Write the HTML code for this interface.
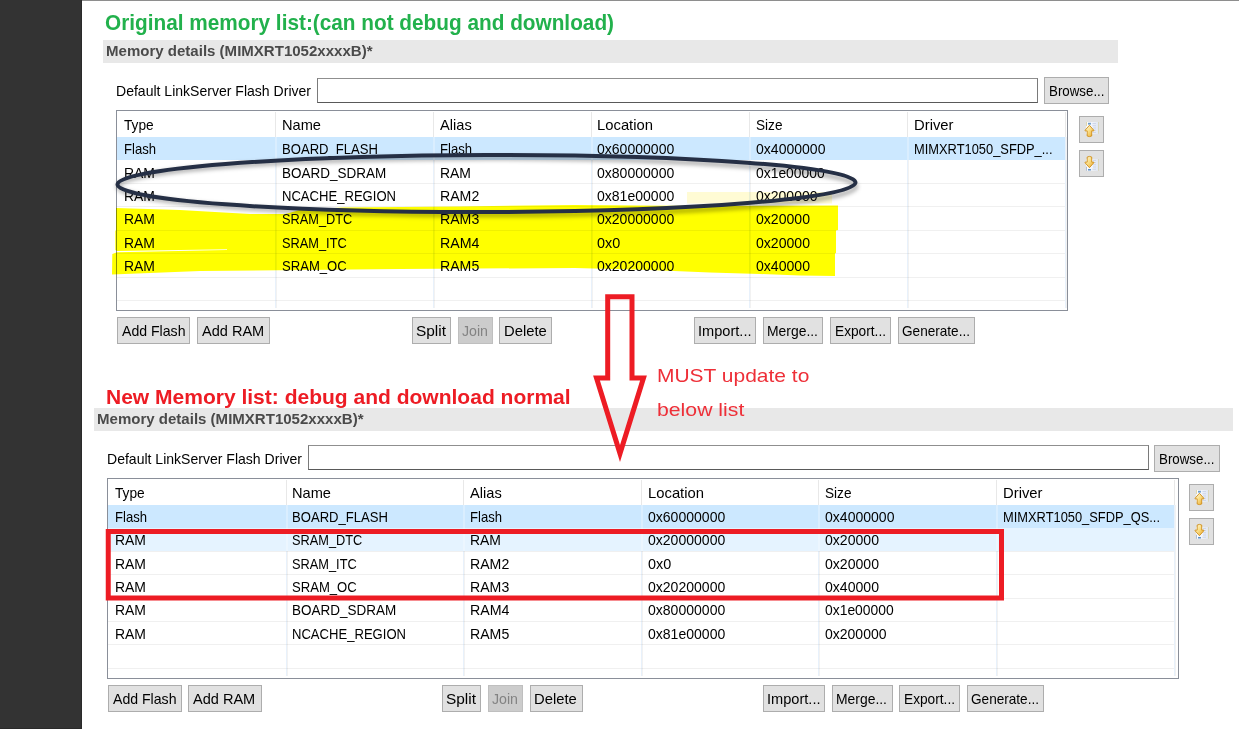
<!DOCTYPE html>
<html lang="en"><head><meta charset="utf-8"><title>Memory list</title>
<style>
html,body{margin:0;padding:0;background:#fff}
body{width:1239px;height:740px;position:relative;overflow:hidden;font-family:"Liberation Sans", sans-serif;}
.t{position:absolute;white-space:nowrap;line-height:1;transform-origin:0 0;}
</style></head><body>
<div style="position:absolute;left:0px;top:0px;width:81px;height:728px;background:#333333;border-right:1px solid #2a2a2a;border-bottom:1px solid #2a2a2a;"></div>
<div style="position:absolute;left:82px;top:0px;width:1157px;height:1px;background:#8e8e8e;"></div>
<div style="position:absolute;left:102.5px;top:39.5px;width:1015.5px;height:23px;background:#e8e8e8;"></div>
<div style="position:absolute;left:317px;top:77.5px;width:719px;height:23px;background:#fff;border:1px solid #7a7a7a;border-top:1.5px solid #8f8f8f;border-bottom:1.5px solid #595959;"></div>
<div style="position:absolute;left:1044px;top:77px;width:63px;height:25px;background:#e1e1e1;border:1px solid #adadad;"></div>
<div style="position:absolute;left:116px;top:110px;width:950px;height:198.5px;background:#fff;border:1px solid #8a8f99;"></div>
<div style="position:absolute;left:117px;top:183.06px;width:948px;height:1px;background:#f0f0f0;"></div>
<div style="position:absolute;left:117px;top:206.48999999999998px;width:948px;height:1px;background:#f0f0f0;"></div>
<div style="position:absolute;left:117px;top:229.92px;width:948px;height:1px;background:#f0f0f0;"></div>
<div style="position:absolute;left:117px;top:253.35px;width:948px;height:1px;background:#f0f0f0;"></div>
<div style="position:absolute;left:117px;top:276.78px;width:948px;height:1px;background:#f0f0f0;"></div>
<div style="position:absolute;left:117px;top:300.21px;width:948px;height:1px;background:#f0f0f0;"></div>
<div style="position:absolute;left:275px;top:112px;width:1px;height:24.69999999999999px;background:#e8e8e8;"></div>
<div style="position:absolute;left:275px;top:136.7px;width:1px;height:171.8px;background:rgba(150,190,235,0.22);"></div>
<div style="position:absolute;left:276px;top:136.7px;width:1px;height:171.8px;background:rgba(0,0,0,0.05);"></div>
<div style="position:absolute;left:433px;top:112px;width:1px;height:24.69999999999999px;background:#e8e8e8;"></div>
<div style="position:absolute;left:433px;top:136.7px;width:1px;height:171.8px;background:rgba(150,190,235,0.22);"></div>
<div style="position:absolute;left:434px;top:136.7px;width:1px;height:171.8px;background:rgba(0,0,0,0.05);"></div>
<div style="position:absolute;left:591px;top:112px;width:1px;height:24.69999999999999px;background:#e8e8e8;"></div>
<div style="position:absolute;left:591px;top:136.7px;width:1px;height:171.8px;background:rgba(150,190,235,0.22);"></div>
<div style="position:absolute;left:592px;top:136.7px;width:1px;height:171.8px;background:rgba(0,0,0,0.05);"></div>
<div style="position:absolute;left:749px;top:112px;width:1px;height:24.69999999999999px;background:#e8e8e8;"></div>
<div style="position:absolute;left:749px;top:136.7px;width:1px;height:171.8px;background:rgba(150,190,235,0.22);"></div>
<div style="position:absolute;left:750px;top:136.7px;width:1px;height:171.8px;background:rgba(0,0,0,0.05);"></div>
<div style="position:absolute;left:907px;top:112px;width:1px;height:24.69999999999999px;background:#e8e8e8;"></div>
<div style="position:absolute;left:907px;top:136.7px;width:1px;height:171.8px;background:rgba(150,190,235,0.22);"></div>
<div style="position:absolute;left:908px;top:136.7px;width:1px;height:171.8px;background:rgba(0,0,0,0.05);"></div>
<div style="position:absolute;left:1065px;top:112px;width:1px;height:24.69999999999999px;background:#e8e8e8;"></div>
<div style="position:absolute;left:1065px;top:136.7px;width:1px;height:171.8px;background:rgba(150,190,235,0.22);"></div>
<div style="position:absolute;left:1066px;top:136.7px;width:1px;height:171.8px;background:rgba(0,0,0,0.05);"></div>
<div style="position:absolute;left:117px;top:136.7px;width:948px;height:23.43px;background:#cce8ff;"></div>
<div style="position:absolute;left:275px;top:136.7px;width:2px;height:23.43px;background:rgba(255,255,255,0.28);"></div>
<div style="position:absolute;left:433px;top:136.7px;width:2px;height:23.43px;background:rgba(255,255,255,0.28);"></div>
<div style="position:absolute;left:591px;top:136.7px;width:2px;height:23.43px;background:rgba(255,255,255,0.28);"></div>
<div style="position:absolute;left:749px;top:136.7px;width:2px;height:23.43px;background:rgba(255,255,255,0.28);"></div>
<div style="position:absolute;left:907px;top:136.7px;width:2px;height:23.43px;background:rgba(255,255,255,0.28);"></div>
<div style="position:absolute;left:1079px;top:116px;width:23px;height:25px;background:#e1e1e1;border:1px solid #adadad;"></div>
<svg style="position:absolute;left:1084px;top:121px" width="17" height="18" viewBox="0 0 17 18"><defs><linearGradient id="g1079_116" x1="0" y1="0" x2="1" y2="1"><stop offset="0" stop-color="#fffbe6"/><stop offset="0.45" stop-color="#fbe08a"/><stop offset="1" stop-color="#e9a526"/></linearGradient><linearGradient id="g1079_116p" x1="0" x2="1"><stop offset="0" stop-color="#ffffff"/><stop offset="1" stop-color="#dfe6f3"/></linearGradient></defs>
<rect x="2.3" y="1" width="12.3" height="11.8" fill="url(#g1079_116p)"/>
<rect x="2" y="1" width="0.8" height="4" fill="#d9cf9a"/><rect x="14" y="1" width="0.9" height="11.8" fill="#d8d4b4"/>
<rect x="4" y="1.8" width="2.9" height="1.8" fill="#6a9bcc"/>
<g stroke="#c6d0e6" stroke-width="0.9"><path d="M8.5 2.6h3.5M8.5 4.8h3.5M9 7h3M9 9.2h3M8.5 11.4h3.5"/></g>
<path d="M5.45 4.3 L9.8 9.2 V9.9 H7.7 V15 Q5.45 16.2 3.2 15 V9.9 H1.1 V9.2 Z" fill="url(#g1079_116)" stroke="#cf8f1c" stroke-width="0.9" stroke-linejoin="round"/>
</svg>
<div style="position:absolute;left:1079px;top:150px;width:23px;height:25px;background:#e1e1e1;border:1px solid #adadad;"></div>
<svg style="position:absolute;left:1084px;top:155px" width="17" height="18" viewBox="0 0 17 18"><defs><linearGradient id="g1079_150" x1="0" y1="0" x2="1" y2="1"><stop offset="0" stop-color="#fffbe6"/><stop offset="0.45" stop-color="#fbe08a"/><stop offset="1" stop-color="#e9a526"/></linearGradient><linearGradient id="g1079_150p" x1="0" x2="1"><stop offset="0" stop-color="#ffffff"/><stop offset="1" stop-color="#dfe6f3"/></linearGradient></defs>
<rect x="2.3" y="4" width="12.3" height="11.8" fill="url(#g1079_150p)"/>
<rect x="2" y="11.8" width="0.8" height="4" fill="#9fb0c8"/><rect x="14" y="4" width="0.9" height="11.8" fill="#d8d4b4"/>
<rect x="4" y="14" width="2.9" height="1.5" fill="#5d90c8"/>
<g stroke="#c6d0e6" stroke-width="0.9"><path d="M9 5.4h3M9 7.6h3M9 9.8h3M9 12h3M8.5 14.2h3.5"/></g>
<path d="M5.45 12.7 L9.8 7.8 V7.1 H7.7 V2 Q5.45 0.8 3.2 2 V7.1 H1.1 V7.8 Z" fill="url(#g1079_150)" stroke="#cf8f1c" stroke-width="0.9" stroke-linejoin="round"/>
</svg>
<div style="position:absolute;left:117px;top:317px;width:71px;height:25px;background:#e1e1e1;border:1px solid #adadad;"></div>
<div style="position:absolute;left:197px;top:317px;width:71px;height:25px;background:#e1e1e1;border:1px solid #adadad;"></div>
<div style="position:absolute;left:412px;top:317px;width:37px;height:25px;background:#e1e1e1;border:1px solid #adadad;"></div>
<div style="position:absolute;left:457.5px;top:317px;width:33.5px;height:25px;background:#cccccc;border:1px solid #bfbfbf;"></div>
<div style="position:absolute;left:499px;top:317px;width:51px;height:25px;background:#e1e1e1;border:1px solid #adadad;"></div>
<div style="position:absolute;left:694px;top:317px;width:60px;height:25px;background:#e1e1e1;border:1px solid #adadad;"></div>
<div style="position:absolute;left:763px;top:317px;width:58px;height:25px;background:#e1e1e1;border:1px solid #adadad;"></div>
<div style="position:absolute;left:830px;top:317px;width:59px;height:25px;background:#e1e1e1;border:1px solid #adadad;"></div>
<div style="position:absolute;left:897.5px;top:317px;width:75.0px;height:25px;background:#e1e1e1;border:1px solid #adadad;"></div>
<div style="position:absolute;left:94px;top:407.5px;width:1139px;height:23px;background:#e8e8e8;"></div>
<div style="position:absolute;left:308px;top:445px;width:838.5px;height:23px;background:#fff;border:1px solid #7a7a7a;border-top:1.5px solid #8f8f8f;border-bottom:1.5px solid #595959;"></div>
<div style="position:absolute;left:1154px;top:444.5px;width:63.5px;height:25.0px;background:#e1e1e1;border:1px solid #adadad;"></div>
<div style="position:absolute;left:106.5px;top:478px;width:1070.0px;height:198.5px;background:#fff;border:1px solid #8a8f99;"></div>
<div style="position:absolute;left:107.5px;top:551.0px;width:1066.5px;height:1px;background:#f0f0f0;"></div>
<div style="position:absolute;left:107.5px;top:574.35px;width:1066.5px;height:1px;background:#f0f0f0;"></div>
<div style="position:absolute;left:107.5px;top:597.7px;width:1066.5px;height:1px;background:#f0f0f0;"></div>
<div style="position:absolute;left:107.5px;top:621.05px;width:1066.5px;height:1px;background:#f0f0f0;"></div>
<div style="position:absolute;left:107.5px;top:644.4000000000001px;width:1066.5px;height:1px;background:#f0f0f0;"></div>
<div style="position:absolute;left:107.5px;top:667.75px;width:1066.5px;height:1px;background:#f0f0f0;"></div>
<div style="position:absolute;left:286px;top:480px;width:1px;height:24.80000000000001px;background:#e8e8e8;"></div>
<div style="position:absolute;left:286px;top:504.8px;width:1px;height:171.7px;background:rgba(150,190,235,0.22);"></div>
<div style="position:absolute;left:287px;top:504.8px;width:1px;height:171.7px;background:rgba(0,0,0,0.05);"></div>
<div style="position:absolute;left:463px;top:480px;width:1px;height:24.80000000000001px;background:#e8e8e8;"></div>
<div style="position:absolute;left:463px;top:504.8px;width:1px;height:171.7px;background:rgba(150,190,235,0.22);"></div>
<div style="position:absolute;left:464px;top:504.8px;width:1px;height:171.7px;background:rgba(0,0,0,0.05);"></div>
<div style="position:absolute;left:641px;top:480px;width:1px;height:24.80000000000001px;background:#e8e8e8;"></div>
<div style="position:absolute;left:641px;top:504.8px;width:1px;height:171.7px;background:rgba(150,190,235,0.22);"></div>
<div style="position:absolute;left:642px;top:504.8px;width:1px;height:171.7px;background:rgba(0,0,0,0.05);"></div>
<div style="position:absolute;left:818px;top:480px;width:1px;height:24.80000000000001px;background:#e8e8e8;"></div>
<div style="position:absolute;left:818px;top:504.8px;width:1px;height:171.7px;background:rgba(150,190,235,0.22);"></div>
<div style="position:absolute;left:819px;top:504.8px;width:1px;height:171.7px;background:rgba(0,0,0,0.05);"></div>
<div style="position:absolute;left:996px;top:480px;width:1px;height:24.80000000000001px;background:#e8e8e8;"></div>
<div style="position:absolute;left:996px;top:504.8px;width:1px;height:171.7px;background:rgba(150,190,235,0.22);"></div>
<div style="position:absolute;left:997px;top:504.8px;width:1px;height:171.7px;background:rgba(0,0,0,0.05);"></div>
<div style="position:absolute;left:1174px;top:480px;width:1px;height:24.80000000000001px;background:#e8e8e8;"></div>
<div style="position:absolute;left:1174px;top:504.8px;width:1px;height:171.7px;background:rgba(150,190,235,0.22);"></div>
<div style="position:absolute;left:1175px;top:504.8px;width:1px;height:171.7px;background:rgba(0,0,0,0.05);"></div>
<div style="position:absolute;left:107.5px;top:504.8px;width:1066.5px;height:23.35px;background:#cce8ff;"></div>
<div style="position:absolute;left:107.5px;top:528.15px;width:1066.5px;height:23.35px;background:#e5f3ff;"></div>
<div style="position:absolute;left:286px;top:504.8px;width:2px;height:23.35px;background:rgba(255,255,255,0.28);"></div>
<div style="position:absolute;left:286px;top:528.15px;width:2px;height:23.35px;background:rgba(255,255,255,0.28);"></div>
<div style="position:absolute;left:463px;top:504.8px;width:2px;height:23.35px;background:rgba(255,255,255,0.28);"></div>
<div style="position:absolute;left:463px;top:528.15px;width:2px;height:23.35px;background:rgba(255,255,255,0.28);"></div>
<div style="position:absolute;left:641px;top:504.8px;width:2px;height:23.35px;background:rgba(255,255,255,0.28);"></div>
<div style="position:absolute;left:641px;top:528.15px;width:2px;height:23.35px;background:rgba(255,255,255,0.28);"></div>
<div style="position:absolute;left:818px;top:504.8px;width:2px;height:23.35px;background:rgba(255,255,255,0.28);"></div>
<div style="position:absolute;left:818px;top:528.15px;width:2px;height:23.35px;background:rgba(255,255,255,0.28);"></div>
<div style="position:absolute;left:996px;top:504.8px;width:2px;height:23.35px;background:rgba(255,255,255,0.28);"></div>
<div style="position:absolute;left:996px;top:528.15px;width:2px;height:23.35px;background:rgba(255,255,255,0.28);"></div>
<div style="position:absolute;left:1189px;top:484px;width:23px;height:25px;background:#e1e1e1;border:1px solid #adadad;"></div>
<svg style="position:absolute;left:1194px;top:489px" width="17" height="18" viewBox="0 0 17 18"><defs><linearGradient id="g1189_484" x1="0" y1="0" x2="1" y2="1"><stop offset="0" stop-color="#fffbe6"/><stop offset="0.45" stop-color="#fbe08a"/><stop offset="1" stop-color="#e9a526"/></linearGradient><linearGradient id="g1189_484p" x1="0" x2="1"><stop offset="0" stop-color="#ffffff"/><stop offset="1" stop-color="#dfe6f3"/></linearGradient></defs>
<rect x="2.3" y="1" width="12.3" height="11.8" fill="url(#g1189_484p)"/>
<rect x="2" y="1" width="0.8" height="4" fill="#d9cf9a"/><rect x="14" y="1" width="0.9" height="11.8" fill="#d8d4b4"/>
<rect x="4" y="1.8" width="2.9" height="1.8" fill="#6a9bcc"/>
<g stroke="#c6d0e6" stroke-width="0.9"><path d="M8.5 2.6h3.5M8.5 4.8h3.5M9 7h3M9 9.2h3M8.5 11.4h3.5"/></g>
<path d="M5.45 4.3 L9.8 9.2 V9.9 H7.7 V15 Q5.45 16.2 3.2 15 V9.9 H1.1 V9.2 Z" fill="url(#g1189_484)" stroke="#cf8f1c" stroke-width="0.9" stroke-linejoin="round"/>
</svg>
<div style="position:absolute;left:1189px;top:518px;width:23px;height:25px;background:#e1e1e1;border:1px solid #adadad;"></div>
<svg style="position:absolute;left:1194px;top:523px" width="17" height="18" viewBox="0 0 17 18"><defs><linearGradient id="g1189_518" x1="0" y1="0" x2="1" y2="1"><stop offset="0" stop-color="#fffbe6"/><stop offset="0.45" stop-color="#fbe08a"/><stop offset="1" stop-color="#e9a526"/></linearGradient><linearGradient id="g1189_518p" x1="0" x2="1"><stop offset="0" stop-color="#ffffff"/><stop offset="1" stop-color="#dfe6f3"/></linearGradient></defs>
<rect x="2.3" y="4" width="12.3" height="11.8" fill="url(#g1189_518p)"/>
<rect x="2" y="11.8" width="0.8" height="4" fill="#9fb0c8"/><rect x="14" y="4" width="0.9" height="11.8" fill="#d8d4b4"/>
<rect x="4" y="14" width="2.9" height="1.5" fill="#5d90c8"/>
<g stroke="#c6d0e6" stroke-width="0.9"><path d="M9 5.4h3M9 7.6h3M9 9.8h3M9 12h3M8.5 14.2h3.5"/></g>
<path d="M5.45 12.7 L9.8 7.8 V7.1 H7.7 V2 Q5.45 0.8 3.2 2 V7.1 H1.1 V7.8 Z" fill="url(#g1189_518)" stroke="#cf8f1c" stroke-width="0.9" stroke-linejoin="round"/>
</svg>
<div style="position:absolute;left:108.25px;top:684.5px;width:71.25px;height:25.0px;background:#e1e1e1;border:1px solid #adadad;"></div>
<div style="position:absolute;left:188.25px;top:684.5px;width:71.25px;height:25.0px;background:#e1e1e1;border:1px solid #adadad;"></div>
<div style="position:absolute;left:442px;top:684.5px;width:37px;height:25.0px;background:#e1e1e1;border:1px solid #adadad;"></div>
<div style="position:absolute;left:487.75px;top:684.5px;width:33.25px;height:25.0px;background:#cccccc;border:1px solid #bfbfbf;"></div>
<div style="position:absolute;left:529.75px;top:684.5px;width:51.0px;height:25.0px;background:#e1e1e1;border:1px solid #adadad;"></div>
<div style="position:absolute;left:763px;top:684.5px;width:60.25px;height:25.0px;background:#e1e1e1;border:1px solid #adadad;"></div>
<div style="position:absolute;left:832px;top:684.5px;width:59px;height:25.0px;background:#e1e1e1;border:1px solid #adadad;"></div>
<div style="position:absolute;left:899.25px;top:684.5px;width:58.75px;height:25.0px;background:#e1e1e1;border:1px solid #adadad;"></div>
<div style="position:absolute;left:966.5px;top:684.5px;width:75.0px;height:25.0px;background:#e1e1e1;border:1px solid #adadad;"></div>
<span class="t" id="t0" style="left:105.10px;top:12px;font-size:22px;color:#22b14c;font-weight:bold;transform:scaleX(0.9443);">Original memory list:(can not debug and download)</span>
<span class="t" id="t1" style="left:106.10px;top:43px;font-size:15px;color:#4a4a4a;font-weight:bold;transform:scaleX(1.0021);">Memory details (MIMXRT1052xxxxB)*</span>
<span class="t" id="t2" style="left:116.10px;top:83px;font-size:15px;color:#000;transform:scaleX(0.9357);">Default LinkServer Flash Driver</span>
<span class="t" id="t3" style="left:1048.60px;top:83px;font-size:15px;color:#000;transform:scaleX(0.8876);">Browse...</span>
<span class="t" id="t4" style="left:123.60px;top:117px;font-size:15px;color:#000;transform:scaleX(0.9145);">Type</span>
<span class="t" id="t5" style="left:281.60px;top:117px;font-size:15px;color:#000;transform:scaleX(0.9746);">Name</span>
<span class="t" id="t6" style="left:439.60px;top:117px;font-size:15px;color:#000;transform:scaleX(0.9765);">Alias</span>
<span class="t" id="t7" style="left:597.35px;top:117px;font-size:15px;color:#000;transform:scaleX(0.9873);">Location</span>
<span class="t" id="t8" style="left:755.60px;top:117px;font-size:15px;color:#000;transform:scaleX(0.9079);">Size</span>
<span class="t" id="t9" style="left:913.60px;top:117px;font-size:15px;color:#000;transform:scaleX(0.9875);">Driver</span>
<span class="t" id="t10" style="left:123.60px;top:141px;font-size:15px;color:#000;transform:scaleX(0.8722);">Flash</span>
<span class="t" id="t11" style="left:281.60px;top:141px;font-size:15px;color:#000;transform:scaleX(0.8724);">BOARD_FLASH</span>
<span class="t" id="t12" style="left:439.60px;top:141px;font-size:15px;color:#000;transform:scaleX(0.8722);">Flash</span>
<span class="t" id="t13" style="left:597.35px;top:141px;font-size:15px;color:#000;transform:scaleX(0.9353);">0x60000000</span>
<span class="t" id="t14" style="left:755.60px;top:141px;font-size:15px;color:#000;transform:scaleX(0.9360);">0x4000000</span>
<span class="t" id="t15" style="left:913.60px;top:141px;font-size:15px;color:#000;transform:scaleX(0.8578);">MIMXRT1050_SFDP_...</span>
<span class="t" id="t16" style="left:123.60px;top:165px;font-size:15px;color:#000;transform:scaleX(0.9297);">RAM</span>
<span class="t" id="t17" style="left:281.60px;top:165px;font-size:15px;color:#000;transform:scaleX(0.8998);">BOARD_SDRAM</span>
<span class="t" id="t18" style="left:439.60px;top:165px;font-size:15px;color:#000;transform:scaleX(0.9297);">RAM</span>
<span class="t" id="t19" style="left:597.35px;top:165px;font-size:15px;color:#000;transform:scaleX(0.9353);">0x80000000</span>
<span class="t" id="t20" style="left:755.60px;top:165px;font-size:15px;color:#000;transform:scaleX(0.9259);">0x1e00000</span>
<span class="t" id="t21" style="left:123.60px;top:188px;font-size:15px;color:#000;transform:scaleX(0.9297);">RAM</span>
<span class="t" id="t22" style="left:281.60px;top:188px;font-size:15px;color:#000;transform:scaleX(0.8712);">NCACHE_REGION</span>
<span class="t" id="t23" style="left:439.60px;top:188px;font-size:15px;color:#000;transform:scaleX(0.9415);">RAM2</span>
<span class="t" id="t24" style="left:597.35px;top:188px;font-size:15px;color:#000;transform:scaleX(0.9353);">0x81e00000</span>
<span class="t" id="t25" style="left:755.60px;top:188px;font-size:15px;color:#000;transform:scaleX(0.9331);">0x200000</span>
<span class="t" id="t26" style="left:123.60px;top:211px;font-size:15px;color:#000;transform:scaleX(0.9297);">RAM</span>
<span class="t" id="t27" style="left:281.60px;top:211px;font-size:15px;color:#000;transform:scaleX(0.8514);">SRAM_DTC</span>
<span class="t" id="t28" style="left:439.60px;top:211px;font-size:15px;color:#000;transform:scaleX(0.9415);">RAM3</span>
<span class="t" id="t29" style="left:597.35px;top:211px;font-size:15px;color:#000;transform:scaleX(0.9353);">0x20000000</span>
<span class="t" id="t30" style="left:755.60px;top:211px;font-size:15px;color:#000;transform:scaleX(0.9381);">0x20000</span>
<span class="t" id="t31" style="left:123.60px;top:235px;font-size:15px;color:#000;transform:scaleX(0.9297);">RAM</span>
<span class="t" id="t32" style="left:281.60px;top:235px;font-size:15px;color:#000;transform:scaleX(0.8537);">SRAM_ITC</span>
<span class="t" id="t33" style="left:439.60px;top:235px;font-size:15px;color:#000;transform:scaleX(0.9475);">RAM4</span>
<span class="t" id="t34" style="left:597.35px;top:235px;font-size:15px;color:#000;transform:scaleX(0.9612);">0x0</span>
<span class="t" id="t35" style="left:755.60px;top:235px;font-size:15px;color:#000;transform:scaleX(0.9381);">0x20000</span>
<span class="t" id="t36" style="left:123.60px;top:258px;font-size:15px;color:#000;transform:scaleX(0.9297);">RAM</span>
<span class="t" id="t37" style="left:281.60px;top:258px;font-size:15px;color:#000;transform:scaleX(0.8728);">SRAM_OC</span>
<span class="t" id="t38" style="left:439.60px;top:258px;font-size:15px;color:#000;transform:scaleX(0.9415);">RAM5</span>
<span class="t" id="t39" style="left:597.35px;top:258px;font-size:15px;color:#000;transform:scaleX(0.9353);">0x20200000</span>
<span class="t" id="t40" style="left:755.60px;top:258px;font-size:15px;color:#000;transform:scaleX(0.9381);">0x40000</span>
<span class="t" id="t41" style="left:121.60px;top:323px;font-size:15px;color:#000;transform:scaleX(0.9401);">Add Flash</span>
<span class="t" id="t42" style="left:201.60px;top:323px;font-size:15px;color:#000;transform:scaleX(0.9696);">Add RAM</span>
<span class="t" id="t43" style="left:415.85px;top:323px;font-size:15px;color:#000;transform:scaleX(1.0278);">Split</span>
<span class="t" id="t44" style="left:461.60px;top:323px;font-size:15px;color:#838383;transform:scaleX(0.9444);">Join</span>
<span class="t" id="t45" style="left:504.10px;top:323px;font-size:15px;color:#000;transform:scaleX(0.9859);">Delete</span>
<span class="t" id="t46" style="left:697.85px;top:323px;font-size:15px;color:#000;transform:scaleX(0.9725);">Import...</span>
<span class="t" id="t47" style="left:767.35px;top:323px;font-size:15px;color:#000;transform:scaleX(0.9267);">Merge...</span>
<span class="t" id="t48" style="left:834.60px;top:323px;font-size:15px;color:#000;transform:scaleX(0.9130);">Export...</span>
<span class="t" id="t49" style="left:901.60px;top:323px;font-size:15px;color:#000;transform:scaleX(0.9061);">Generate...</span>
<span class="t" id="t50" style="left:106.30px;top:386px;font-size:21px;color:#ed1c24;font-weight:bold;transform:scaleX(1.0005);">New Memory list: debug and download normal</span>
<span class="t" id="t51" style="left:97.35px;top:411px;font-size:15px;color:#4a4a4a;font-weight:bold;transform:scaleX(1.0021);">Memory details (MIMXRT1052xxxxB)*</span>
<span class="t" id="t52" style="left:107.35px;top:451px;font-size:15px;color:#000;transform:scaleX(0.9357);">Default LinkServer Flash Driver</span>
<span class="t" id="t53" style="left:1158.85px;top:451px;font-size:15px;color:#000;transform:scaleX(0.8876);">Browse...</span>
<span class="t" id="t54" style="left:114.85px;top:485px;font-size:15px;color:#000;transform:scaleX(0.9145);">Type</span>
<span class="t" id="t55" style="left:292.35px;top:485px;font-size:15px;color:#000;transform:scaleX(0.9746);">Name</span>
<span class="t" id="t56" style="left:470.10px;top:485px;font-size:15px;color:#000;transform:scaleX(0.9765);">Alias</span>
<span class="t" id="t57" style="left:647.60px;top:485px;font-size:15px;color:#000;transform:scaleX(0.9873);">Location</span>
<span class="t" id="t58" style="left:825.10px;top:485px;font-size:15px;color:#000;transform:scaleX(0.9079);">Size</span>
<span class="t" id="t59" style="left:1002.60px;top:485px;font-size:15px;color:#000;transform:scaleX(0.9875);">Driver</span>
<span class="t" id="t60" style="left:114.85px;top:509px;font-size:15px;color:#000;transform:scaleX(0.8722);">Flash</span>
<span class="t" id="t61" style="left:292.35px;top:509px;font-size:15px;color:#000;transform:scaleX(0.8724);">BOARD_FLASH</span>
<span class="t" id="t62" style="left:470.10px;top:509px;font-size:15px;color:#000;transform:scaleX(0.8722);">Flash</span>
<span class="t" id="t63" style="left:647.60px;top:509px;font-size:15px;color:#000;transform:scaleX(0.9353);">0x60000000</span>
<span class="t" id="t64" style="left:825.10px;top:509px;font-size:15px;color:#000;transform:scaleX(0.9360);">0x4000000</span>
<span class="t" id="t65" style="left:1002.60px;top:509px;font-size:15px;color:#000;transform:scaleX(0.8573);">MIMXRT1050_SFDP_QS...</span>
<span class="t" id="t66" style="left:114.85px;top:532px;font-size:15px;color:#000;transform:scaleX(0.9297);">RAM</span>
<span class="t" id="t67" style="left:292.35px;top:532px;font-size:15px;color:#000;transform:scaleX(0.8514);">SRAM_DTC</span>
<span class="t" id="t68" style="left:470.10px;top:532px;font-size:15px;color:#000;transform:scaleX(0.9297);">RAM</span>
<span class="t" id="t69" style="left:647.60px;top:532px;font-size:15px;color:#000;transform:scaleX(0.9353);">0x20000000</span>
<span class="t" id="t70" style="left:825.10px;top:532px;font-size:15px;color:#000;transform:scaleX(0.9381);">0x20000</span>
<span class="t" id="t71" style="left:114.85px;top:556px;font-size:15px;color:#000;transform:scaleX(0.9297);">RAM</span>
<span class="t" id="t72" style="left:292.35px;top:556px;font-size:15px;color:#000;transform:scaleX(0.8537);">SRAM_ITC</span>
<span class="t" id="t73" style="left:470.10px;top:556px;font-size:15px;color:#000;transform:scaleX(0.9415);">RAM2</span>
<span class="t" id="t74" style="left:647.60px;top:556px;font-size:15px;color:#000;transform:scaleX(0.9612);">0x0</span>
<span class="t" id="t75" style="left:825.10px;top:556px;font-size:15px;color:#000;transform:scaleX(0.9381);">0x20000</span>
<span class="t" id="t76" style="left:114.85px;top:579px;font-size:15px;color:#000;transform:scaleX(0.9297);">RAM</span>
<span class="t" id="t77" style="left:292.35px;top:579px;font-size:15px;color:#000;transform:scaleX(0.8728);">SRAM_OC</span>
<span class="t" id="t78" style="left:470.10px;top:579px;font-size:15px;color:#000;transform:scaleX(0.9415);">RAM3</span>
<span class="t" id="t79" style="left:647.60px;top:579px;font-size:15px;color:#000;transform:scaleX(0.9353);">0x20200000</span>
<span class="t" id="t80" style="left:825.10px;top:579px;font-size:15px;color:#000;transform:scaleX(0.9381);">0x40000</span>
<span class="t" id="t81" style="left:114.85px;top:602px;font-size:15px;color:#000;transform:scaleX(0.9297);">RAM</span>
<span class="t" id="t82" style="left:292.35px;top:602px;font-size:15px;color:#000;transform:scaleX(0.8998);">BOARD_SDRAM</span>
<span class="t" id="t83" style="left:470.10px;top:602px;font-size:15px;color:#000;transform:scaleX(0.9475);">RAM4</span>
<span class="t" id="t84" style="left:647.60px;top:602px;font-size:15px;color:#000;transform:scaleX(0.9353);">0x80000000</span>
<span class="t" id="t85" style="left:825.10px;top:602px;font-size:15px;color:#000;transform:scaleX(0.9259);">0x1e00000</span>
<span class="t" id="t86" style="left:114.85px;top:626px;font-size:15px;color:#000;transform:scaleX(0.9297);">RAM</span>
<span class="t" id="t87" style="left:292.35px;top:626px;font-size:15px;color:#000;transform:scaleX(0.8712);">NCACHE_REGION</span>
<span class="t" id="t88" style="left:470.10px;top:626px;font-size:15px;color:#000;transform:scaleX(0.9415);">RAM5</span>
<span class="t" id="t89" style="left:647.60px;top:626px;font-size:15px;color:#000;transform:scaleX(0.9353);">0x81e00000</span>
<span class="t" id="t90" style="left:825.10px;top:626px;font-size:15px;color:#000;transform:scaleX(0.9331);">0x200000</span>
<span class="t" id="t91" style="left:112.85px;top:691px;font-size:15px;color:#000;transform:scaleX(0.9401);">Add Flash</span>
<span class="t" id="t92" style="left:192.85px;top:691px;font-size:15px;color:#000;transform:scaleX(0.9696);">Add RAM</span>
<span class="t" id="t93" style="left:446.10px;top:691px;font-size:15px;color:#000;transform:scaleX(1.0278);">Split</span>
<span class="t" id="t94" style="left:491.60px;top:691px;font-size:15px;color:#838383;transform:scaleX(0.9444);">Join</span>
<span class="t" id="t95" style="left:534.10px;top:691px;font-size:15px;color:#000;transform:scaleX(0.9859);">Delete</span>
<span class="t" id="t96" style="left:767.10px;top:691px;font-size:15px;color:#000;transform:scaleX(0.9725);">Import...</span>
<span class="t" id="t97" style="left:836.10px;top:691px;font-size:15px;color:#000;transform:scaleX(0.9267);">Merge...</span>
<span class="t" id="t98" style="left:903.60px;top:691px;font-size:15px;color:#000;transform:scaleX(0.9130);">Export...</span>
<span class="t" id="t99" style="left:970.60px;top:691px;font-size:15px;color:#000;transform:scaleX(0.9061);">Generate...</span>
<span class="t" id="t100" style="left:656.90px;top:367px;font-size:18.5px;color:#ee2f38;transform:scaleX(1.1334);">MUST update to</span>
<span class="t" id="t101" style="left:656.90px;top:401px;font-size:18.5px;color:#ee2f38;transform:scaleX(1.1473);">below list</span>
<svg style="position:absolute;left:0;top:0;mix-blend-mode:multiply" width="1239" height="740">
<rect x="687" y="192" width="145" height="11.5" fill="#fffbd4"/>
<path d="M116 208 L180 210 L250 214 L285 214 L300 210 L343 207.4 L460 206.5 L575 205 L700 206 L838 205.6 L838 230 L836 230.5 L836 253 L835 253.5 L835 276 L800 275.5 L760 274 L710 272.5 L650 270 L575 268 L400 269 L200 271 L150 273 L112 274.5 L112.3 254 L117 252.3 L227 250 L227 249.2 L117 251 L115.3 250 L115.3 231 L116 230 Z" fill="#ffff00"/>
</svg>
<svg style="position:absolute;left:0;top:0" width="1239" height="740">
<defs><filter id="sh" x="-5%" y="-30%" width="110%" height="170%"><feGaussianBlur stdDeviation="2.2"/></filter></defs>
<ellipse cx="487" cy="186.5" rx="369" ry="28.5" fill="none" stroke="#000" stroke-opacity="0.35" stroke-width="4" filter="url(#sh)"/>
<ellipse cx="486.5" cy="183.5" rx="369" ry="28.5" fill="none" stroke="#252f45" stroke-width="4" transform="rotate(-0.15 486.5 183.5)"/>
<path d="M607.7 296.7 H632 V378 H643.5 L620 453.5 L596.5 378 H607.7 Z" fill="none" stroke="#ed1c24" stroke-width="5" stroke-linejoin="miter"/>
<rect x="108.25" y="531.5" width="893.25" height="66.5" fill="none" stroke="#ed1c24" stroke-width="5"/>
</svg>
</body></html>
